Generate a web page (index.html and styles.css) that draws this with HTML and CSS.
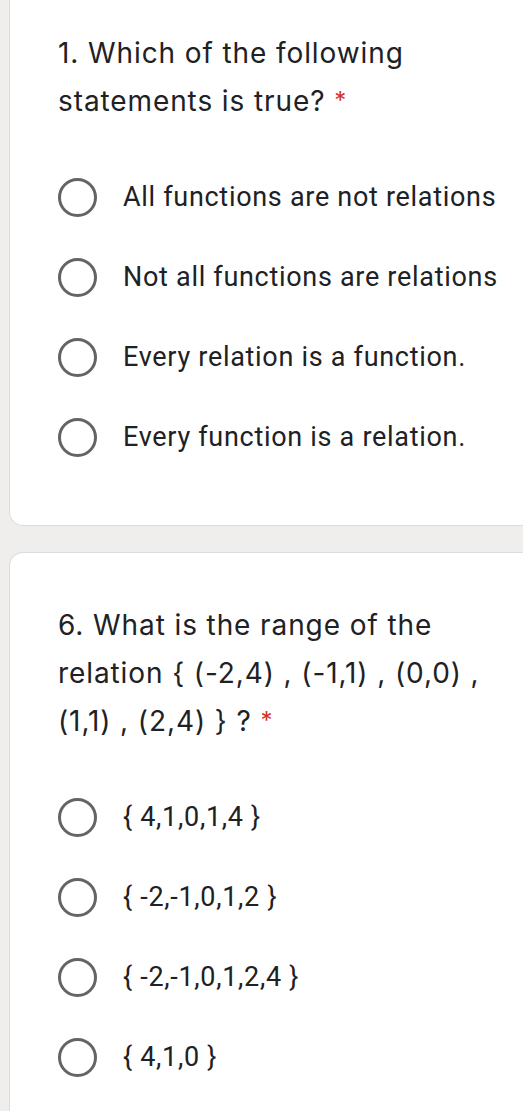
FILE: index.html
```html
<!DOCTYPE html>
<html>
<head>
<meta charset="utf-8">
<link rel="stylesheet" href="styles.css">
</head>
<body>
<div class="page">
  <section class="card card-first">
    <div class="title">1. Which of the following statements is true? <span class="req">*</span></div>
    <div class="options">
      <div class="opt"><span class="radio"></span><span class="label">All functions are not relations</span></div>
      <div class="opt"><span class="radio"></span><span class="label">Not all functions are relations</span></div>
      <div class="opt"><span class="radio"></span><span class="label">Every relation is a function.</span></div>
      <div class="opt"><span class="radio"></span><span class="label">Every function is a relation.</span></div>
    </div>
  </section>
  <section class="card card-second">
    <div class="title">6. What is the range of the relation { (-2,4) , (-1,1) , (0,0) , (1,1) , (2,4) } ? <span class="req">*</span></div>
    <div class="options">
      <div class="opt"><span class="radio"></span><span class="label">{ 4,1,0,1,4 }</span></div>
      <div class="opt"><span class="radio"></span><span class="label">{ -2,-1,0,1,2 }</span></div>
      <div class="opt"><span class="radio"></span><span class="label">{ -2,-1,0,1,2,4 }</span></div>
      <div class="opt"><span class="radio"></span><span class="label">{ 4,1,0 }</span></div>
    </div>
  </section>
</div>
</body>
</html>
```
FILE: styles.css
```css
html, body {
  margin: 0;
  padding: 0;
  background: #f0eeed;
  overflow: hidden;
}
.page {
  padding-left: 9px;
  display: flex;
  flex-direction: column;
  gap: 26px;
  width: 560px;
}
.card {
  background: #fff;
  border: 1px solid #dadce0;
  border-right: none;
  border-radius: 14px 0 0 14px;
  padding: 0 0 48px 48px;
  color: #202124;
}
.card-first {
  border-top: none;
  border-top-left-radius: 0;
  padding-top: 29px;
}
.card-second {
  padding-top: 48px;
}
.title {
  font-family: Inter, "Liberation Sans", sans-serif;
  font-size: 28px;
  letter-spacing: 0.9px;
  line-height: 48px;
  width: 432px;
  color: #202124;
}
.req {
  color: #d93025;
  font-size: 24px;
  vertical-align: 2px;
  letter-spacing: 0;
}
.options {
  display: flex;
  flex-direction: column;
  margin-top: 32px;
}
.opt {
  height: 80px;
  display: flex;
  align-items: center;
  gap: 26px;
}
.radio {
  width: 33px;
  height: 33px;
  border: 3px solid #646464;
  border-radius: 50%;
  flex: none;
}
.label {
  font-family: Roboto, "Liberation Sans", sans-serif;
  font-size: 27px;
  letter-spacing: 0.7px;
  color: #202124;
  white-space: nowrap;
}
```
